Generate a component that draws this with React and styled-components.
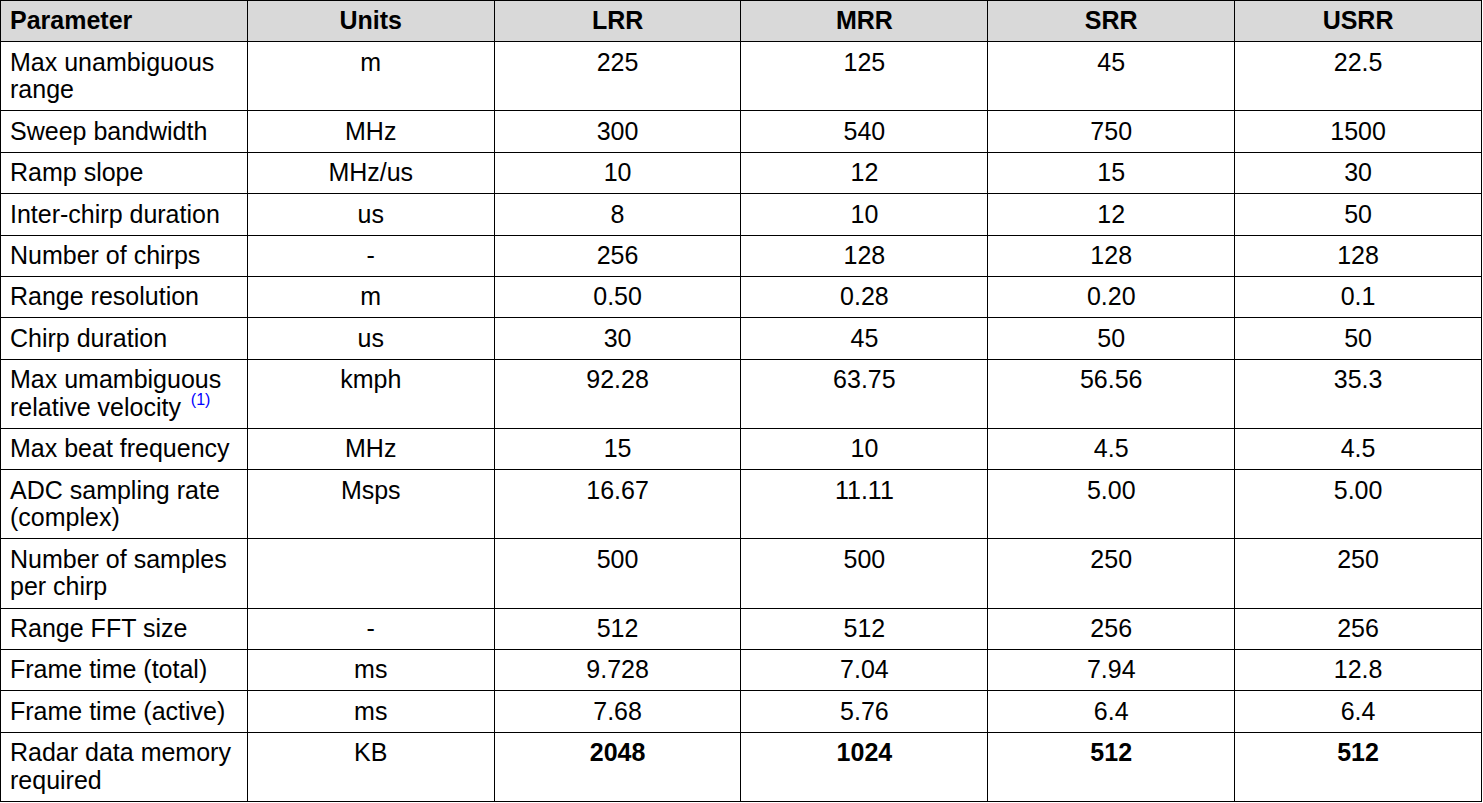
import React from "react";
import styled, { createGlobalStyle } from "styled-components";

const Global = createGlobalStyle`
  html, body { margin: 0; padding: 0; background: #fff; }
  body { font-family: "Liberation Sans", Arial, sans-serif; color: #000; }
`;

const Table = styled.table`
  border-collapse: collapse;
  table-layout: fixed;
  width: 1482px;
  font-size: 25px;
  line-height: 27.7px;
`;

const Th = styled.th`
  background: #d9d9d9;
  font-weight: bold;
  border: 1px solid #000;
  padding: 6.3px 9px 6.4px;
  text-align: ${(p) => (p.$left ? "left" : "center")};
  vertical-align: top;
`;

const Td = styled.td`
  border: 1px solid #000;
  padding: 6.3px 9px 6.4px;
  text-align: ${(p) => (p.$left ? "left" : "center")};
  font-weight: ${(p) => (p.$bold ? "bold" : "normal")};
  vertical-align: top;
`;

const Note = styled.sup`
  color: #0000ff;
  font-size: 16px;
  line-height: 0;
  vertical-align: 11px;
  margin-left: 3px;
`;

const headers = ["Parameter", "Units", "LRR", "MRR", "SRR", "USRR"];

const rows = [
  [<>Max unambiguous<br />range</>, "m", "225", "125", "45", "22.5"],
  ["Sweep bandwidth", "MHz", "300", "540", "750", "1500"],
  ["Ramp slope", "MHz/us", "10", "12", "15", "30"],
  ["Inter-chirp duration", "us", "8", "10", "12", "50"],
  ["Number of chirps", "-", "256", "128", "128", "128"],
  ["Range resolution", "m", "0.50", "0.28", "0.20", "0.1"],
  ["Chirp duration", "us", "30", "45", "50", "50"],
  [<>Max umambiguous<br />relative velocity <Note>(1)</Note></>, "kmph", "92.28", "63.75", "56.56", "35.3"],
  ["Max beat frequency", "MHz", "15", "10", "4.5", "4.5"],
  [<>ADC sampling rate<br />(complex)</>, "Msps", "16.67", "11.11", "5.00", "5.00"],
  [<>Number of samples<br />per chirp</>, "", "500", "500", "250", "250"],
  ["Range FFT size", "-", "512", "512", "256", "256"],
  ["Frame time (total)", "ms", "9.728", "7.04", "7.94", "12.8"],
  ["Frame time (active)", "ms", "7.68", "5.76", "6.4", "6.4"],
  [<>Radar data memory<br />required</>, "KB", "2048", "1024", "512", "512", true],
];

export default function App() {
  return (
    <>
      <Global />
      <Table>
        <thead>
          <tr>
            {headers.map((h, i) => (
              <Th key={h} $left={i === 0}>{h}</Th>
            ))}
          </tr>
        </thead>
        <tbody>
          {rows.map((r, ri) => {
            const bold = r[6] === true;
            return (
              <tr key={ri}>
                {r.slice(0, 6).map((c, ci) => (
                  <Td key={ci} $left={ci === 0} $bold={bold && ci >= 2}>
                    {c}
                  </Td>
                ))}
              </tr>
            );
          })}
        </tbody>
      </Table>
    </>
  );
}
